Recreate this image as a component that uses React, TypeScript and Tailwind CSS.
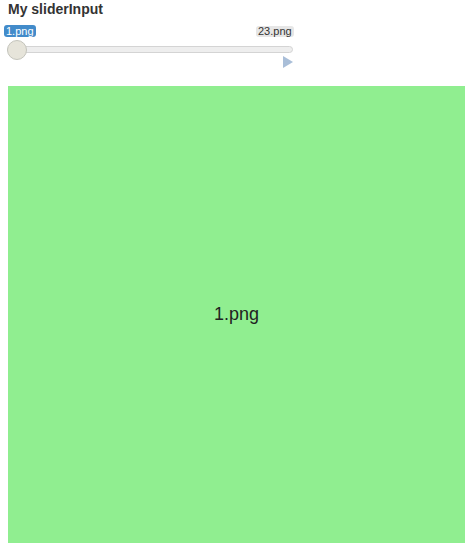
import React from "react";

export default function App() {
  return (
    <div className="min-h-screen bg-white px-2 font-['Liberation_Sans',Arial,sans-serif] text-[#333]">
      <div className="pt-[1px] text-[14px] font-bold leading-[16px]">My sliderInput</div>

      {/* slider */}
      <div className="relative ml-[-4px] h-[52px] w-[292px]">
        <span className="absolute left-0 top-[8px] rounded-[3px] bg-[#428bca] px-[2px] text-[11px] leading-[12px] text-white">
          1.png
        </span>
        <span className="absolute left-[252px] top-[9px] rounded-[3px] bg-[#e6e6e6] px-[2px] text-[11px] leading-[11px] text-[#333]">
          23.png
        </span>
        <div className="absolute left-[3px] top-[29px] h-[7px] w-[286px] rounded-full border border-[#d4d4d4] bg-[#eeeeee]" />
        <div className="absolute left-[3px] top-[23px] h-[20px] w-[20px] rounded-full border border-[#c4c4bc] bg-[#e6e4da]" />
        <svg className="absolute left-[279px] top-[39px]" width="10" height="12" viewBox="0 0 10 12">
          <polygon points="0,0 10,6 0,12" fill="#a9bed8" />
        </svg>
      </div>

      {/* plot */}
      <div className="mt-[17px] flex h-[457px] w-[457px] items-center justify-center bg-[#90ee90]">
        <span className="text-[18px] text-[#222]">1.png</span>
      </div>
    </div>
  );
}
